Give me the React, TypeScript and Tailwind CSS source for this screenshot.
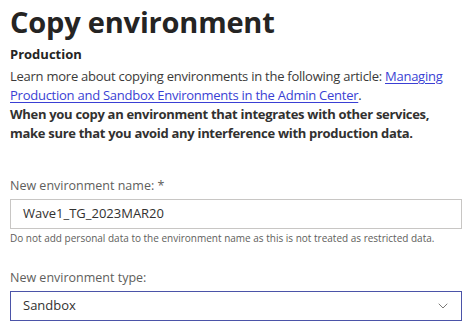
import { ChevronDown } from 'lucide-react';

const linkClass = 'text-[#3a3fd4] underline underline-offset-[2px]';

export default function App() {
  return (
    <div
      className="h-[335px] w-[474px] overflow-hidden bg-white px-[10px] text-[#323130]"
      style={{ fontFamily: '"Open Sans", "Noto Sans", sans-serif' }}
    >
      <h1 className="pt-[4px] text-[29px] font-bold leading-[36px] tracking-[-0.2px] text-[#252423]">Copy environment</h1>
      <p className="mt-[5px] text-[13px] font-bold leading-[19px] text-[#252423]">Production</p>
      <p className="mt-[3px] text-[13px] leading-[19px] tracking-[-0.25px] text-[#3b3a39]">
        Learn more about copying environments in the following article:{' '}
        <a href="#" className={linkClass}>
          Managing
        </a>{' '}
        <a href="#" className={linkClass}>
          Production and Sandbox Environments in the Admin Center
        </a>
        .
      </p>
      <p className="text-[13px] font-bold leading-[19px] tracking-[-0.3px] text-[#323130]">
        When you copy an environment that integrates with other services, make sure that you avoid any interference
        with production data.
      </p>

      <div className="mt-[33px]">
        <label className="block text-[12.5px] leading-[19px] text-[#605e5c]">New environment name: *</label>
        <div className="mt-[4px] flex h-[30px] w-[452px] items-center border border-[#c8c6c4] px-[12px] text-[13px] text-[#323130]">
          Wave1_TG_2023MAR20
        </div>
        <p className="mt-[2px] text-[10px] leading-[14px] text-[#605e5c]">
          Do not add personal data to the environment name as this is not treated as restricted data.
        </p>
      </div>

      <div className="mt-[23px]">
        <label className="block text-[12.5px] leading-[19px] text-[#605e5c]">New environment type:</label>
        <div className="mt-[4px] flex h-[30px] w-[452px] items-center justify-between border-[1.5px] border-[#4b54a8] pl-[12px] pr-[10px] text-[13px] text-[#323130]">
          <span>Sandbox</span>
          <ChevronDown className="h-[16px] w-[16px] text-[#605e5c]" strokeWidth={1.25} />
        </div>
      </div>
    </div>
  );
}
